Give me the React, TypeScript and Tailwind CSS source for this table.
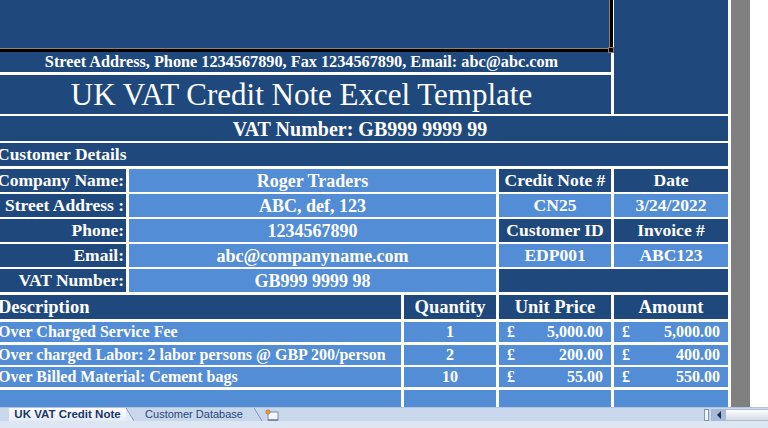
const dark = "bg-[#1f497d]"
const light = "bg-[#538dd5]"

type Cell = { text: string; tone: "dark" | "light"; span?: boolean }

const fields: { label: string; value: string; c: Cell; d?: Cell }[] = [
  { label: "Company Name:", value: "Roger Traders", c: { text: "Credit Note #", tone: "dark" }, d: { text: "Date", tone: "dark" } },
  { label: "Street Address :", value: "ABC, def, 123", c: { text: "CN25", tone: "light" }, d: { text: "3/24/2022", tone: "light" } },
  { label: "Phone:", value: "1234567890", c: { text: "Customer ID", tone: "dark" }, d: { text: "Invoice #", tone: "dark" } },
  { label: "Email:", value: "abc@companyname.com", c: { text: "EDP001", tone: "light" }, d: { text: "ABC123", tone: "light" } },
  { label: "VAT Number:", value: "GB999 9999 98", c: { text: "", tone: "dark", span: true } },
]

const items = [
  { desc: "Over Charged Service Fee", qty: "1", price: "5,000.00", amount: "5,000.00" },
  { desc: "Over charged Labor: 2 labor persons @ GBP 200/person", qty: "2", price: "200.00", amount: "400.00" },
  { desc: "Over Billed Material: Cement bags", qty: "10", price: "55.00", amount: "550.00" },
  { desc: "", qty: "", price: "", amount: "" },
]

function Money({ value }: { value: string }) {
  return (
    <div className={`flex w-full items-center justify-between pl-[8px] pr-[8px] ${light}`}>
      <span>{value ? "£" : ""}</span>
      <span>{value}</span>
    </div>
  )
}

function SheetTabs() {
  return (
    <div className="flex h-[21px] shrink-0 flex-col font-['Liberation_Sans',Arial,sans-serif]">
      <div className="flex h-[14px] border-t border-[#b3c5de] bg-[#c8d7eb]">
        <div className="w-[9px]" />
        <div className="flex w-[117px] items-center justify-center bg-gradient-to-b from-white to-[#e3ebf6] text-[11.5px] font-bold leading-none text-[#1b3766]">
          UK VAT Credit Note
        </div>
        <div className="w-[8px] bg-[linear-gradient(to_top_right,#e3ebf6_44%,#7d96bd_50%,#c8d7eb_56%)]" />
        <div className="flex w-[120px] items-center justify-center text-[11px] font-normal leading-none text-[#28497c]">
          Customer Database
        </div>
        <div className="w-[8px] bg-[linear-gradient(to_top_right,#c8d7eb_44%,#7d96bd_50%,#c8d7eb_56%)]" />
        <div className="flex w-[20px] items-center justify-center">
          <svg width="16" height="12" viewBox="0 0 16 12">
            <rect x="4" y="3" width="10" height="8" fill="#f3f6fb" stroke="#7b8ca6" />
            <path d="M4 11 L14 11" stroke="#56657d" />
            <circle cx="4" cy="3" r="2.2" fill="#e8a040" stroke="#b06a20" strokeWidth="0.6" />
          </svg>
        </div>
        <div className="flex-1" />
        <div className="mt-[1px] h-[12px] w-[5px] border border-[#8096b8] bg-[#f5f7fb]" />
        <div className="ml-[2px] mt-[1px] flex h-[12px] w-[15px] items-center justify-center bg-[#a7bad8]">
          <div className="h-0 w-0 border-y-[4px] border-r-[4px] border-y-transparent border-r-[#1c2f52]" />
        </div>
        <div className="mt-[1px] h-[12px] w-[42px] border-y border-[#b0bdd0] bg-gradient-to-b from-white to-[#d5dce7]" />
      </div>
      <div className="flex-1 bg-[#dde7f4]" />
    </div>
  )
}

export default function App() {
  return (
    <div className="flex h-[428px] w-[768px] flex-col overflow-hidden bg-white font-['Liberation_Serif','Times_New_Roman',serif] font-bold text-white">
      <div className="flex h-[407px] shrink-0">
        <div className="flex w-[731px] shrink-0 flex-col overflow-hidden">
          {/* banner */}
          <div className="flex h-[114px] shrink-0">
            <div className="flex w-[613px] flex-col">
              <div className={`relative h-[52px] shrink-0 border-b-[3px] border-r-[3px] border-black ${dark} shadow-[inset_-1px_-1px_0_#a07c5e]`}>
                <div className="absolute -bottom-[4px] -right-[4px] size-[6px] border border-[#9a7b66] bg-black" />
              </div>
              <div className={`flex h-[20px] w-[611px] items-center justify-center pr-[8px] text-[16.25px] leading-none ${dark}`}>
                Street Address, Phone 1234567890, Fax 1234567890, Email: abc@abc.com
              </div>
              <div className={`mt-[3px] flex h-[39px] w-[611px] items-center justify-center pr-[8px] text-[31px] font-normal leading-none ${dark}`}>
                UK VAT Credit Note Excel Template
              </div>
            </div>
            <div className={`ml-px w-[114px] ${dark}`} />
          </div>

          <div className={`mt-[2px] flex h-[25px] w-[728px] shrink-0 items-center justify-center pr-[8px] text-[20px] leading-none ${dark}`}>
            VAT Number: GB999 9999 99
          </div>

          <div className={`mt-[2px] flex h-[23px] w-[728px] shrink-0 items-center text-[17.5px] leading-none ${dark}`}>
            <span className="-ml-[3px]">Customer Details</span>
          </div>

          {/* customer fields */}
          <div className="mt-[3px] flex flex-col gap-[2px]">
            {fields.map((f) => (
              <div key={f.label} className="flex h-[23px] w-[728px] shrink-0 gap-[3px] text-[17.5px] leading-none">
                <div className={`flex w-[126px] items-center justify-end overflow-hidden whitespace-nowrap pr-[2px] ${dark}`}>
                  <span className="shrink-0">{f.label}</span>
                </div>
                <div className={`flex w-[367px] items-center justify-center text-[18px] ${light}`}>{f.value}</div>
                {f.c.span ? (
                  <div className={`flex w-[229px] items-center justify-center ${dark}`} />
                ) : (
                  <>
                    <div className={`flex w-[112px] items-center justify-center ${f.c.tone === "dark" ? dark : light}`}>{f.c.text}</div>
                    <div className={`flex w-[114px] items-center justify-center ${f.d?.tone === "dark" ? dark : light}`}>{f.d?.text}</div>
                  </>
                )}
              </div>
            ))}
          </div>

          {/* item table */}
          <div className="mt-[3px] flex h-[24px] w-[728px] shrink-0 gap-[3px] text-[18.5px] leading-none">
            <div className={`flex w-[401px] items-center ${dark}`}>
              <span className="-ml-[2px]">Description</span>
            </div>
            <div className={`flex w-[92px] items-center justify-center ${dark}`}>Quantity</div>
            <div className={`flex w-[112px] items-center justify-center ${dark}`}>Unit Price</div>
            <div className={`flex w-[114px] items-center justify-center ${dark}`}>Amount</div>
          </div>

          {items.map((it, i) => (
            <div
              key={i}
              className={`${i === 2 ? "mt-[2px]" : "mt-[3px]"} flex h-[20px] w-[728px] shrink-0 gap-[3px] text-[16px] leading-none`}
            >
              <div className={`flex w-[401px] items-center overflow-hidden whitespace-nowrap ${light}`}>
                <span className="-ml-[2px] shrink-0">{it.desc}</span>
              </div>
              <div className={`flex w-[92px] items-center justify-center ${light}`}>{it.qty}</div>
              <div className="flex w-[112px]">
                <Money value={it.price} />
              </div>
              <div className="flex w-[114px]">
                <Money value={it.amount} />
              </div>
            </div>
          ))}
        </div>
        <div className="w-[19px] shrink-0 bg-[#808080]" />
        <div className="flex-1 bg-white" />
      </div>
      <SheetTabs />
    </div>
  )
}
